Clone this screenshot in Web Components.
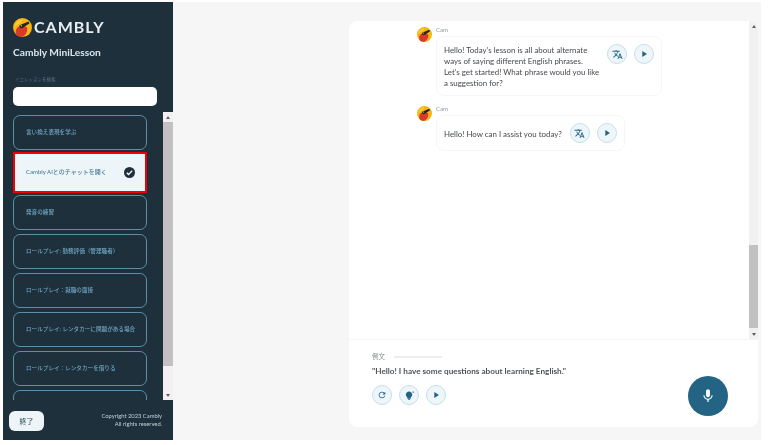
<!DOCTYPE html>
<html lang="ja">
<head>
<meta charset="utf-8">
<title>Cambly MiniLesson</title>
<style>
  html, body { margin: 0; height: 100%; background: #fff; overflow: hidden; }
  body { font-family: Lato, "Noto Sans CJK JP", sans-serif; }
</style>
</head>
<body>
<cambly-app></cambly-app>

<script>
const ICONS = {
  translate: `<path d="M12.87 15.07l-2.54-2.51.03-.03c1.74-1.94 2.98-4.17 3.71-6.53H17V4h-7V2H8v2H1v1.99h11.17C11.5 7.92 10.44 9.75 9 11.35 8.07 10.32 7.3 9.19 6.69 8h-2c.73 1.63 1.73 3.17 2.98 4.56l-5.09 5.02L4 19l5-5 3.11 3.11.76-2.04zM18.5 10h-2L12 22h2l1.12-3h4.75L21 22h2l-4.5-12zm-2.62 7l1.62-4.33L19.12 17h-3.24z"/>`,
  play: `<path d="M8 5v14l11-7z"/>`,
  refresh: `<path d="M17.65 6.35C16.2 4.9 14.21 4 12 4c-4.42 0-7.99 3.58-7.99 8s3.57 8 7.99 8c3.73 0 6.84-2.55 7.73-6h-2.08c-.82 2.33-3.04 4-5.65 4-3.31 0-6-2.69-6-6s2.69-6 6-6c1.66 0 3.14.69 4.22 1.78L13 11h7V4l-2.35 2.35z"/>`,
  bulb: `<path d="M8.5 21c0 .55.45 1 1 1h3c.55 0 1-.45 1-1v-1h-5v1zM11 3C7.14 3 4 6.14 4 10c0 2.38 1.19 4.47 3 5.74V18c0 .55.45 1 1 1h6c.55 0 1-.45 1-1v-2.26c1.81-1.27 3-3.36 3-5.74 0-3.86-3.14-7-7-7z"/><path d="M20 2l.7 1.8L22.5 4.500l-1.800.7L20 7l-.7-1.800-1.800-.7 1.800-.7z"/>`,
  mic: `<path d="M12 14c1.66 0 2.99-1.34 2.99-3L15 5c0-1.66-1.34-3-3-3S9 3.34 9 5v6c0 1.66 1.34 3 3 3zm5.3-3c0 3-2.54 5.1-5.3 5.1S6.7 14 6.7 11H5c0 3.41 2.72 6.23 6 6.72V21h2v-3.28c3.28-.48 6-3.3 6-6.72h-1.7z"/>`
};

const LOGO = `
  <svg viewBox="0 0 32 32" width="100%" height="100%">
    <circle cx="16" cy="16" r="16" fill="#f7b512"/>
    <path d="M3 16 C3 8 9 3 16 3 L12 9 C8 10 5 13 3 16Z" fill="#f9cf3a"/>
    <path d="M7 30 C3 25 4 18 9 15 L14 12 L23 15 C26 20 22 29 15 32 C12 32 9 31 7 30Z" fill="#d8392b"/>
    <path d="M11 12 L26 6 L28 9 L16 17 C13 18 10 16 11 12Z" fill="#22252a"/>
    <circle cx="14" cy="13" r="1.400" fill="#f7b512"/>
  </svg>`;

class IconButton extends HTMLElement {
  connectedCallback() {
    const name = this.getAttribute("icon");
    const scale = this.getAttribute("glyph") || "11";
    this.attachShadow({ mode: "open" });
    this.shadowRoot.innerHTML = `
      <style>
        :host {
          display: flex;
          flex: none;
          width: 20px;
          height: 20px;
          box-sizing: border-box;
          align-items: center;
          justify-content: center;
          border-radius: 50%;
          border: 1px solid #c3dfec;
          background: #eef6fa;
          color: #236484;
        }
        svg { fill: currentColor; display: block; }
      </style>
      <svg viewBox="0 0 24 24" width="${scale}" height="${scale}">${ICONS[name]}</svg>
    `;
  }
}

class ScrollRail extends HTMLElement {
  connectedCallback() {
    const before = this.getAttribute("before");
    const thumb = this.getAttribute("thumb");
    this.attachShadow({ mode: "open" });
    this.shadowRoot.innerHTML = `
      <style>
        :host {
          display: flex;
          flex-direction: column;
          flex: none;
          width: var(--rail-width, 10px);
          background: #f1f1f1;
        }
        .arrow {
          height: 10px;
          display: flex;
          align-items: center;
          justify-content: center;
          flex: none;
        }
        .arrow i {
          width: 0;
          height: 0;
          border-left: 2.5px solid transparent;
          border-right: 2.5px solid transparent;
        }
        .up i { border-bottom: 3px solid #606060; }
        .down i { border-top: 3px solid #606060; }
        .before { height: ${before}px; flex: none; }
        .thumb { height: ${thumb}px; background: #c1c1c1; flex: none; }
        .rest { flex: 1; }
      </style>
      <div class="arrow up"><i></i></div>
      <div class="before"></div>
      <div class="thumb"></div>
      <div class="rest"></div>
      <div class="arrow down"><i></i></div>
    `;
  }
}

class LessonItem extends HTMLElement {
  connectedCallback() {
    const selected = this.hasAttribute("selected");
    this.attachShadow({ mode: "open" });
    this.shadowRoot.innerHTML = `
      <style>
        :host {
          display: flex;
          flex: none;
          box-sizing: border-box;
          height: 35px;
          align-items: center;
          justify-content: space-between;
          padding: 0 10px 2px 12px;
          border: 1.5px solid #5b8fa9;
          border-radius: 7px;
          font-size: 5.600px;
          font-weight: 500;
          color: #6fa5c1;
          white-space: nowrap;
        }
        :host([selected]) {
          height: 41px;
          margin: -2px 0;
          padding: 0 10px 2px 11px;
          border: 2.500px solid #f00000;
          border-radius: 0;
          background: #eef5f9;
          color: #4a7a96;
          font-size: 6px;
        }
        svg { display: block; margin-top: 2px; }
      </style>
      <slot></slot>
      ${selected ? `<svg width="11" height="11" viewBox="0 0 24 24">
        <circle cx="12" cy="12" r="12" fill="#1f2f3b"/>
        <path d="M6 12.500l4 4 8-8.500" fill="none" stroke="#fff" stroke-width="2.800"/>
      </svg>` : ""}
    `;
  }
}

class CamblySidebar extends HTMLElement {
  connectedCallback() {
    this.attachShadow({ mode: "open" });
    this.shadowRoot.innerHTML = `
      <style>
        :host {
          display: flex;
          flex-direction: column;
          flex: none;
          width: 170px;
          background: #1e303c;
          color: #fff;
        }
        .head { height: 110px; box-sizing: border-box; padding: 15px 16px 0 10px; flex: none; }
        .brand { display: flex; align-items: center; gap: 2px; height: 20px; }
        .logo { width: 19px; height: 19px; flex: none; }
        .wordmark {
          font-family: Lato, "Noto Sans", sans-serif;
          font-size: 16px;
          line-height: 20px;
          font-weight: 700;
          letter-spacing: 1px;
          color: #e9eef1;
        }
        h1 {
          margin: 8px 0 0;
          font-size: 10.200px;
          line-height: 14px;
          font-weight: 700;
          color: #dbe4e9;
        }
        label {
          display: block;
          margin: 17px 0 0 2px;
          font-size: 4.500px;
          line-height: 7px;
          color: #5d7584;
        }
        .search {
          height: 19px;
          margin-top: 4px;
          background: #fff;
          border-radius: 5px;
        }
        .scroller { flex: 1; min-height: 0; display: flex; }
        .list {
          flex: 1;
          min-width: 0;
          overflow: hidden;
          display: flex;
          flex-direction: column;
          gap: 4px;
          padding: 3px 16px 0 10px;
        }
        .foot {
          height: 40px;
          flex: none;
          box-sizing: border-box;
          display: flex;
          align-items: center;
          justify-content: space-between;
          padding: 0 11px 0 6px;
        }
        .quit {
          width: 35px;
          height: 20px;
          display: flex;
          align-items: center;
          justify-content: center;
          background: #eef5f9;
          border-radius: 6px;
          font-size: 7px;
          color: #2d4654;
          margin-top: 1px;
        }
        .copy {
          font-size: 5.800px;
          line-height: 8px;
          text-align: right;
          color: #c5d0d6;
        }
      </style>
      <div class="head">
        <div class="brand">
          <div class="logo">${LOGO}</div>
          <div class="wordmark">CAMBLY</div>
        </div>
        <h1>Cambly MiniLesson</h1>
        <label>ミニレッスンを検索</label>
        <div class="search"></div>
      </div>
      <div class="scroller">
        <div class="list"><slot></slot></div>
        <scroll-rail before="0" thumb="244"></scroll-rail>
      </div>
      <div class="foot">
        <div class="quit">終了</div>
        <div class="copy">Copyright 2023 Cambly<br>All rights reserved.</div>
      </div>
    `;
  }
}

class ChatMessage extends HTMLElement {
  connectedCallback() {
    this.attachShadow({ mode: "open" });
    this.shadowRoot.innerHTML = `
      <style>
        :host { display: flex; gap: 4px; align-items: flex-start; }
        .avatar { width: 15px; height: 15px; flex: none; }
        .name { font-size: 6px; line-height: 7px; margin: 0 0 3px; color: #8b979e; }
        .bubble {
          display: inline-flex;
          gap: 8px;
          box-sizing: border-box;
          padding: 7px;
          border: 1px solid #f4f6f7;
          border-radius: 8px;
          background: #fff;
        }
        .text {
          align-self: center;
          font-size: 7.900px;
          line-height: 11px;
          color: #45494f;
          white-space: nowrap;
          padding-top: 1px;
          margin-bottom: -1px;
        }
        .actions { display: flex; gap: 7px; flex: none; }
      </style>
      <div class="avatar">${LOGO}</div>
      <div>
        <div class="name">Cam</div>
        <div class="bubble">
          <div class="text"><slot></slot></div>
          <div class="actions">
            <icon-button icon="translate"></icon-button>
            <icon-button icon="play" glyph="10"></icon-button>
          </div>
        </div>
      </div>
    `;
  }
}

class ExamplePanel extends HTMLElement {
  connectedCallback() {
    this.attachShadow({ mode: "open" });
    this.shadowRoot.innerHTML = `
      <style>
        :host {
          display: flex;
          flex: none;
          height: 88px;
          box-sizing: border-box;
          padding: 12px 30px 0 23px;
          justify-content: space-between;
          border-top: 1px solid #f5f5f5;
        }
        .label { display: flex; align-items: center; gap: 9px; font-size: 6.500px; line-height: 9px; color: #85898d; }
        .label i { display: block; width: 48px; height: 2px; background: #eeeeee; }
        .line { margin: 4px 0 0; font-size: 8.200px; line-height: 12px; font-weight: 700; color: #50545a; white-space: nowrap; }
        .actions { display: flex; gap: 7px; margin-top: 8px; }
        .mic {
          width: 40px;
          height: 40px;
          margin-top: 24px;
          border-radius: 50%;
          background: #236484;
          display: flex;
          align-items: center;
          justify-content: center;
        }
        .mic svg { fill: #f3f8fb; display: block; }
      </style>
      <div>
        <div class="label">例文<i></i></div>
        <p class="line"><slot></slot></p>
        <div class="actions">
          <icon-button icon="refresh" glyph="10"></icon-button>
          <icon-button icon="bulb"></icon-button>
          <icon-button icon="play" glyph="10"></icon-button>
        </div>
      </div>
      <div class="mic"><svg viewBox="0 0 24 24" width="16" height="16">${ICONS.mic}</svg></div>
    `;
  }
}

class LessonCard extends HTMLElement {
  connectedCallback() {
    this.attachShadow({ mode: "open" });
    this.shadowRoot.innerHTML = `
      <style>
        :host {
          display: flex;
          flex-direction: column;
          flex: none;
          width: 409px;
          height: 406px;
          background: #fff;
          border-radius: 8px;
          overflow: hidden;
        }
        .top { flex: none; height: 318px; display: flex; }
        .chat {
          flex: 1;
          min-width: 0;
          box-sizing: border-box;
          padding: 5px 0 0 68px;
          display: flex;
          flex-direction: column;
          gap: 9px;
        }
        scroll-rail { --rail-width: 9px; }
      </style>
      <div class="top">
        <div class="chat"><slot name="chat"></slot></div>
        <scroll-rail before="214" thumb="83"></scroll-rail>
      </div>
      <slot name="panel"></slot>
    `;
  }
}

class CamblyApp extends HTMLElement {
  connectedCallback() {
    this.attachShadow({ mode: "open" });
    this.shadowRoot.innerHTML = `
      <style>
        :host {
          display: flex;
          width: 758px;
          height: 438px;
          margin: 2px 0 0 3px;
          filter: blur(0.4px);
        }
        main {
          flex: 1;
          background: #f6f6f6;
          display: flex;
          justify-content: flex-end;
          padding: 19px 3px 0 0;
        }
      </style>
      <cambly-sidebar>
        <lesson-item>言い換え表現を学ぶ</lesson-item>
        <lesson-item selected>Cambly AIとのチャットを開く</lesson-item>
        <lesson-item>発音の練習</lesson-item>
        <lesson-item>ロールプレイ: 勤務評価（管理職者）</lesson-item>
        <lesson-item>ロールプレイ：就職の面接</lesson-item>
        <lesson-item>ロールプレイ: レンタカーに問題がある場合</lesson-item>
        <lesson-item>ロールプレイ：レンタカーを借りる</lesson-item>
        <lesson-item></lesson-item>
      </cambly-sidebar>
      <main>
        <lesson-card>
          <chat-message slot="chat">Hello! Today's lesson is all about alternate<br>ways of saying different English phrases.<br>Let's get started! What phrase would you like<br>a suggestion for?</chat-message>
          <chat-message slot="chat">Hello! How can I assist you today?</chat-message>
          <example-panel slot="panel">"Hello! I have some questions about learning English."</example-panel>
        </lesson-card>
      </main>
    `;
  }
}

customElements.define("icon-button", IconButton);
customElements.define("scroll-rail", ScrollRail);
customElements.define("lesson-item", LessonItem);
customElements.define("cambly-sidebar", CamblySidebar);
customElements.define("chat-message", ChatMessage);
customElements.define("example-panel", ExamplePanel);
customElements.define("lesson-card", LessonCard);
customElements.define("cambly-app", CamblyApp);
</script>
</body>
</html>
